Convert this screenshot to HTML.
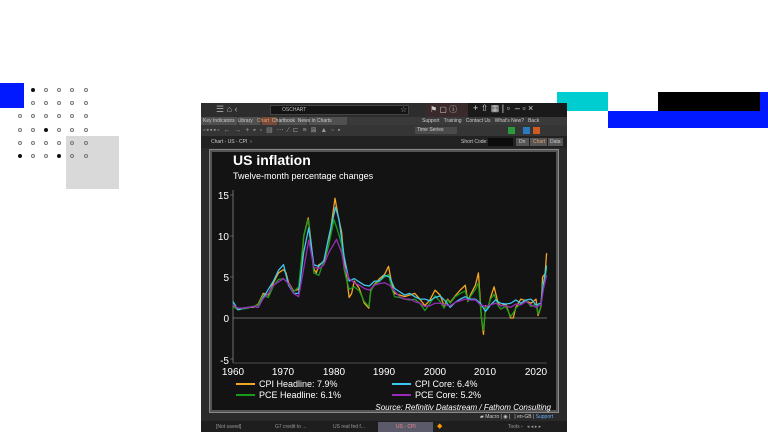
<!DOCTYPE html>
<html><head><meta charset="utf-8"><style>
*{margin:0;padding:0;box-sizing:border-box}
body{width:768px;height:432px;background:#fff;position:relative;overflow:hidden;font-family:"Liberation Sans",sans-serif}
.a{position:absolute}
.dot{position:absolute;width:4px;height:4px;border:1px solid #777;border-radius:50%}
.dot.f{background:#111;border-color:#111}
.t{position:absolute;font-size:5px;color:#ccc;white-space:nowrap}
</style></head><body>
<div class="a" style="left:0;top:83px;width:24px;height:25px;background:#0019ff"></div>
<div class="a" style="left:66px;top:136px;width:53px;height:53px;background:#d9d9d9"></div>
<div id="dots"></div>
<div class="dot f" style="left:31px;top:88px"></div><div class="dot" style="left:44px;top:88px"></div><div class="dot" style="left:57px;top:88px"></div><div class="dot" style="left:70px;top:88px"></div><div class="dot" style="left:84px;top:88px"></div>
<div class="dot" style="left:31px;top:101px"></div><div class="dot" style="left:44px;top:101px"></div><div class="dot" style="left:57px;top:101px"></div><div class="dot" style="left:70px;top:101px"></div><div class="dot" style="left:84px;top:101px"></div>
<div class="dot" style="left:18px;top:114px"></div><div class="dot" style="left:31px;top:114px"></div><div class="dot" style="left:44px;top:114px"></div><div class="dot" style="left:57px;top:114px"></div><div class="dot" style="left:70px;top:114px"></div><div class="dot" style="left:84px;top:114px"></div>
<div class="dot" style="left:18px;top:128px"></div><div class="dot" style="left:31px;top:128px"></div><div class="dot f" style="left:44px;top:128px"></div><div class="dot" style="left:57px;top:128px"></div><div class="dot" style="left:70px;top:128px"></div><div class="dot" style="left:84px;top:128px"></div>
<div class="dot" style="left:18px;top:141px"></div><div class="dot" style="left:31px;top:141px"></div><div class="dot" style="left:44px;top:141px"></div><div class="dot" style="left:57px;top:141px"></div><div class="dot" style="left:70px;top:141px"></div><div class="dot" style="left:84px;top:141px"></div>
<div class="dot f" style="left:18px;top:154px"></div><div class="dot" style="left:31px;top:154px"></div><div class="dot" style="left:44px;top:154px"></div><div class="dot f" style="left:57px;top:154px"></div><div class="dot" style="left:70px;top:154px"></div><div class="dot" style="left:84px;top:154px"></div>

<div class="a" style="left:557px;top:92px;width:51px;height:19px;background:#00cdd0"></div>
<div class="a" style="left:658px;top:92px;width:102px;height:19px;background:#000"></div>
<div class="a" style="left:760px;top:92px;width:8px;height:19px;background:#0019ff"></div>
<div class="a" style="left:608px;top:111px;width:160px;height:17px;background:#0019ff"></div>

<!-- window -->
<div class="a" style="left:201px;top:103px;width:366px;height:329px;background:#2a2a2a"></div>
<div class="a" style="left:201px;top:103px;width:366px;height:14px;background:#2d2d2d"></div>
<div class="a" style="left:426px;top:103px;width:42px;height:14px;background:#3a2a2c"></div>
<div class="a" style="left:468px;top:103px;width:99px;height:14px;background:#1a1a1a"></div>
<div class="a" style="left:270px;top:105px;width:139px;height:10px;background:#141414;border:1px solid #444"></div>
<div class="t" style="left:282px;top:107px;color:#bbb">OSCHART</div>
<div class="t" style="left:216px;top:104px;font-size:9px;color:#aaa">☰ ⌂ ‹</div>
<div class="t" style="left:400px;top:105px;font-size:8px;color:#aaa">☆</div>
<div class="t" style="left:430px;top:104px;font-size:8px;color:#ccc">⚑ ▢ ⓘ</div>
<div class="t" style="left:473px;top:103px;font-size:9px;color:#ddd">+ ⇧ ▦ | ▫ &nbsp;– ▫ ×</div>
<div class="a" style="left:201px;top:117px;width:366px;height:8px;background:#3a3a3a"></div>
<div class="a" style="left:201px;top:117px;width:36px;height:8px;background:#505050"></div>
<div class="a" style="left:239px;top:117px;width:21px;height:8px;background:#505050"></div>
<div class="a" style="left:262px;top:117px;width:15px;height:8px;background:#7a4a38"></div>
<div class="a" style="left:279px;top:117px;width:28px;height:8px;background:#505050"></div>
<div class="a" style="left:309px;top:117px;width:38px;height:8px;background:#505050"></div>
<div class="t" style="left:203px;top:118px">Key Indicators &nbsp;Library &nbsp;&nbsp;<span style="color:#e8a070">Chart</span> &nbsp;Chartbook &nbsp;News in Charts</div>
<div class="t" style="left:422px;top:118px">Support &nbsp;&nbsp;Training &nbsp;&nbsp;Contact Us &nbsp;&nbsp;What's New? &nbsp;&nbsp;Back</div>
<div class="a" style="left:201px;top:125px;width:366px;height:11px;background:#353535"></div>
<div class="t" style="left:203px;top:126px;font-size:7px;color:#999;letter-spacing:1px">▫▪▪▪▫ ← → + ▪ ▫ ▤ ⋯ ⁄ ⊏ ≡ ⊠ ▲ ▫ ▪</div>
<div class="a" style="left:415px;top:127px;width:42px;height:7px;background:#4a4a4a"></div>
<div class="t" style="left:417px;top:127px">Time Series</div>
<div class="a" style="left:508px;top:127px;width:7px;height:7px;background:#2a9a3a"></div>
<div class="a" style="left:523px;top:127px;width:7px;height:7px;background:#2a7ac0"></div>
<div class="a" style="left:533px;top:127px;width:7px;height:7px;background:#d05a20"></div>
<div class="a" style="left:201px;top:136px;width:366px;height:12px;background:#222"></div>
<div class="t" style="left:211px;top:139px">Chart - US - CPI &nbsp;›</div>
<div class="t" style="left:461px;top:139px">Short Code:</div>
<div class="a" style="left:488px;top:138px;width:25px;height:8px;background:#0c0c0c"></div>
<div class="a" style="left:516px;top:138px;width:13px;height:8px;background:#555"></div>
<div class="a" style="left:530px;top:138px;width:17px;height:8px;background:#555"></div>
<div class="a" style="left:548px;top:138px;width:15px;height:8px;background:#555"></div>
<div class="t" style="left:519px;top:139px">Dn</div><div class="t" style="left:533px;top:139px;color:#e8a070">Chart</div><div class="t" style="left:550px;top:139px">Data</div>

<div class="a" style="left:209px;top:149px;width:350px;height:264px;background:#555;border:1px solid #888"></div>
<div class="a" style="left:212px;top:152px;width:344px;height:258px;background:#131313"></div>
<div class="a" style="left:233px;top:152px;color:#fff;font-weight:bold;font-size:14px">US inflation</div>
<div class="a" style="left:233px;top:171px;color:#fff;font-size:9px">Twelve-month percentage changes</div>

<svg class="a" style="left:0;top:0" width="768" height="432">
<g font-family="Liberation Sans" font-size="10" fill="#fff" text-anchor="end">
<text x="229" y="199">15</text><text x="229" y="240">10</text><text x="229" y="281">5</text><text x="229" y="322">0</text><text x="229" y="364">-5</text>
</g>
<g font-family="Liberation Sans" font-size="10" fill="#fff" text-anchor="middle">
<text x="233" y="375">1960</text><text x="283" y="375">1970</text><text x="334" y="375">1980</text><text x="384" y="375">1990</text><text x="435" y="375">2000</text><text x="485" y="375">2010</text><text x="536" y="375">2020</text>
</g>
<line x1="233" y1="190" x2="233" y2="363" stroke="#888" stroke-width="0.8"/>
<line x1="233" y1="318" x2="547" y2="318" stroke="#888" stroke-width="0.8"/>
<g stroke="#888" stroke-width="0.6">
<line x1="230" y1="195" x2="233" y2="195"/><line x1="230" y1="236" x2="233" y2="236"/><line x1="230" y1="277" x2="233" y2="277"/><line x1="230" y1="359" x2="233" y2="359"/>
<line x1="233" y1="363" x2="547" y2="363"/>
</g>
<g transform="translate(233,318) scale(5.05,-8.2)" fill="none" stroke-width="1.3" stroke-linejoin="round">
<polyline vector-effect="non-scaling-stroke" stroke="#f5a623" points="0,1.5 1,1.1 2,1.2 3,1.3 4,1.3 5,1.7 6,3 7,2.8 8,4.3 9,5.5 10,5.9 10.5,5.5 11,4.3 12,3.3 13,3.5 13.5,6 14,10 14.9,12.2 15.5,9 16,6 16.5,5.5 17,6.5 18,6.8 19,9 19.5,11.5 20.2,14.6 20.8,12.5 21.5,10.5 22,7 22.5,5 23,2.5 23.5,3 24,4.5 25,3.6 26,1.8 26.9,1.2 27.3,3.5 28,4.1 29,4.8 30,5.3 30.8,6.3 31.5,4 32,3 33,2.8 34,2.6 35,2.8 36,3 37,2.3 38,1.5 39,2.2 40,3.4 41,2.8 41.8,1.5 42.5,2.3 43,1.9 44,2.7 45,3.4 46,4 46.5,2 47,2.8 48,4 48.6,5.5 49.2,0 49.6,-2 50,1.5 50.5,1.2 51,2.5 51.7,3.8 52.5,1.8 53,1.5 54,1.7 55,0 55.5,0 56,1.3 57,2.3 58,2.1 59,1.8 60,2.3 60.4,0.3 61,1.4 61.3,5 61.8,5.4 62.1,7.9"/>
<polyline vector-effect="non-scaling-stroke" stroke="#1a9a1a" points="0,1.4 1,1 2,1.1 3,1.2 4,1.4 5,1.6 6,2.8 7,2.5 8,3.9 9,4.7 10,4.8 11,4.2 12,3.2 13,3.8 14,10 14.9,12 15.5,8.5 16,5.5 17,5.2 18,7 19,9 20,12 20.8,10.5 21.5,9 22,6 22.5,4.6 23,3.5 24,3.8 25,3.3 26,2 26.9,1.4 27.3,3.3 28,4 29,4.5 30,5 30.8,5.3 31.5,3.5 32,2.6 33,2.5 34,2.3 35,2.2 36,2.3 37,1.8 38,0.9 39,1.8 40,2.7 41,2 41.8,1.2 42.5,2.2 43,1.8 44,2.6 45,3 46,3.3 46.5,2 47,2.6 48,3.5 48.6,4.3 49.2,0 49.6,-1.5 50,1.2 50.5,1.4 51,2.3 51.7,2.9 52.5,1.5 53,1.1 54,1.4 55,0.2 55.5,0.6 56,1.2 57,1.8 58,2.2 59,1.4 60,1.7 60.4,0.5 61,1.4 61.3,4 61.8,4.8 62.1,6.1"/>
<polyline vector-effect="non-scaling-stroke" stroke="#3cc8f0" points="0,2 1,1 2,1.2 3,1.3 4,1.4 5,1.3 6,2.5 7,3.5 8,4.5 9,5.8 10,6.5 11,4 12,3 13,3 14,8 15,11 16,6.5 17,6.3 18,7 19,10 20.3,13.5 21,12 22,7.5 23,4.5 24,4.8 25,4.4 26,4 27,3.9 28,4.5 29,4.5 30,5.2 31,5 32,3.6 33,3.2 34,2.8 35,3 36,2.6 37,2.3 38,2.3 39,2.1 40,2.5 41,2.7 42,2.1 43,1.3 44,1.9 45,2.3 46,2.6 47,2.3 48,2.3 49,1.8 50,0.8 51,1.6 52,2.2 53,1.8 54,1.7 55,1.8 56,2.2 57,1.8 58,2.2 59,2.3 60,1.6 61,1.8 61.5,4.3 62.1,6.4"/>
<polyline vector-effect="non-scaling-stroke" stroke="#9a2aba" points="0,1.6 1,1.2 2,1.2 3,1.3 4,1.4 5,1.3 6,2.4 7,3 8,4 9,4.4 10,4.8 11,4.2 12,3 13,2.6 14,6 15,9.5 16,6.2 17,6 18,6.5 19,8 20.5,9.6 21.5,8 22,6.3 23,4.8 24,4.3 25,4 26,3.6 27,3.4 28,4 29,4.2 30,4.3 31,4 32,3.3 33,2.6 34,2.3 35,2.3 36,2 37,1.8 38,1.4 39,1.5 40,1.8 41,1.8 42,1.6 43,1.5 44,1.9 45,2.1 46,2.3 47,2.2 48,2.2 49,1.6 50,1.4 51,1.6 52,1.8 53,1.5 54,1.5 55,1.3 56,1.7 57,1.6 58,2 59,1.6 60,1.3 61,1.6 61.5,3.6 62.1,5.2"/>
</g>
<g stroke-width="2"><line x1="236" y1="384" x2="255" y2="384" stroke="#f5a623"/><line x1="236" y1="395" x2="255" y2="395" stroke="#1a9a1a"/><line x1="392" y1="384" x2="411" y2="384" stroke="#3cc8f0"/><line x1="392" y1="395" x2="411" y2="395" stroke="#9a2aba"/></g>
<g font-family="Liberation Sans" font-size="9" fill="#fff">
<text x="259" y="387">CPI Headline: 7.9%</text><text x="259" y="398">PCE Headline: 6.1%</text>
<text x="415" y="387">CPI Core: 6.4%</text><text x="415" y="398">PCE Core: 5.2%</text>
<text x="551" y="410" text-anchor="end" font-style="italic" font-size="8">Source: Refinitiv Datastream / Fathom Consulting</text>
</g>
</svg>
<div class="a" style="left:201px;top:413px;width:366px;height:8px;background:#2a2a2a"></div>
<div class="t" style="left:480px;top:414px">▰ Macro | ◉ | &nbsp;&nbsp;| en-GB | <span style="color:#6af">Support</span></div>
<div class="a" style="left:201px;top:421px;width:366px;height:11px;background:#1e1e1e"></div>
<div class="a" style="left:378px;top:422px;width:55px;height:10px;background:#5a5a6a"></div>
<div class="t" style="left:216px;top:424px;color:#999">[Not saved]</div>
<div class="t" style="left:275px;top:424px;color:#999">G7 credit to ...</div>
<div class="t" style="left:333px;top:424px;color:#999">US real fed f...</div>
<div class="t" style="left:396px;top:424px;color:#e88">US - CPI</div>
<div class="t" style="left:437px;top:422px;color:#f90;font-size:7px">◆</div>
<div class="t" style="left:508px;top:424px;color:#999">Tools › &nbsp;&nbsp;◂ ◂ ▸ ▸</div>
</body></html>
